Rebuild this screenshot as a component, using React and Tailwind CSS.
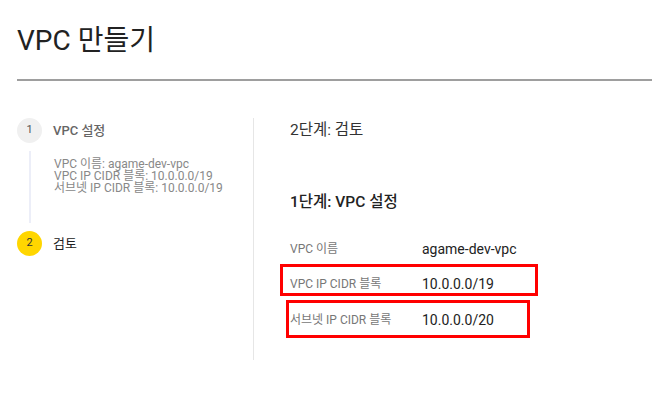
import React from 'react';

const summary = [
  'VPC 이름: agame-dev-vpc',
  'VPC IP CIDR 블록: 10.0.0.0/19',
  '서브넷 IP CIDR 블록: 10.0.0.0/19',
];

const rows = [
  { label: 'VPC 이름', value: 'agame-dev-vpc', h: 'h-[34px]' },
  { label: 'VPC IP CIDR 블록', value: '10.0.0.0/19', h: 'h-[36px]' },
  { label: '서브넷 IP CIDR 블록', value: '10.0.0.0/20', h: 'h-[36px]' },
];

export default function App() {
  return (
    <div className="w-[652px] h-[417px] bg-white pl-[17px] font-['Roboto','Noto_Sans_CJK_KR',sans-serif] overflow-hidden">
      {/* Header */}
      <h1 className="pt-[24px] text-[28px] leading-[34px] text-[#222] font-normal">VPC 만들기</h1>
      <div className="mt-[21px] h-[2px] bg-[#9e9e9e]" />

      <div className="flex mt-[37px]">
        {/* Steps */}
        <div className="w-[236px] shrink-0">
          <div className="flex items-center">
            <div className="w-[25px] h-[25px] rounded-full bg-[#f0f0f0] flex items-center justify-center text-[11px] text-[#555]">1</div>
            <span className="ml-[11px] text-[13px] font-medium text-[#666]">VPC 설정</span>
          </div>
          <div className="flex">
            <div className="ml-[12px] w-[2px] h-[72px] mt-[8px] bg-[#eceef8]" />
            <div className="ml-[23px] mt-[15px] text-[12px] leading-[12px] text-[#888]">
              {summary.map((s) => (
                <div key={s}>{s}</div>
              ))}
            </div>
          </div>
          <div className="flex items-center mt-[8px]">
            <div className="w-[25px] h-[25px] rounded-full bg-[#ffd600] flex items-center justify-center text-[11px] text-[#333]">2</div>
            <span className="ml-[11px] text-[13px] text-[#222]">검토</span>
          </div>
        </div>

        {/* Divider */}
        <div className="w-px h-[242px] bg-[#e6e6e6] shrink-0" />

        {/* Review */}
        <div className="pl-[36px] relative flex-1">
          <div className="pt-[2px] text-[15.5px] leading-[20px] text-[#333]">2단계: 검토</div>
          <div className="mt-[52px] text-[15.5px] leading-[20px] font-medium text-[#222]">1단계: VPC 설정</div>
          <div className="mt-[20px]">
            {rows.map((r) => (
              <div key={r.label} className={`flex items-center ${r.h}`}>
                <div className="w-[132px] text-[12px] text-[#777]">{r.label}</div>
                <div className="text-[14px] text-[#222]">{r.value}</div>
              </div>
            ))}
          </div>
          {/* annotation boxes */}
          <div className="absolute left-[26px] top-[146px] w-[258px] h-[32px] border-[3px] border-[#ff0000]" />
          <div className="absolute left-[32px] top-[182px] w-[244px] h-[38px] border-[3px] border-[#ff0000]" />
        </div>
      </div>
    </div>
  );
}
